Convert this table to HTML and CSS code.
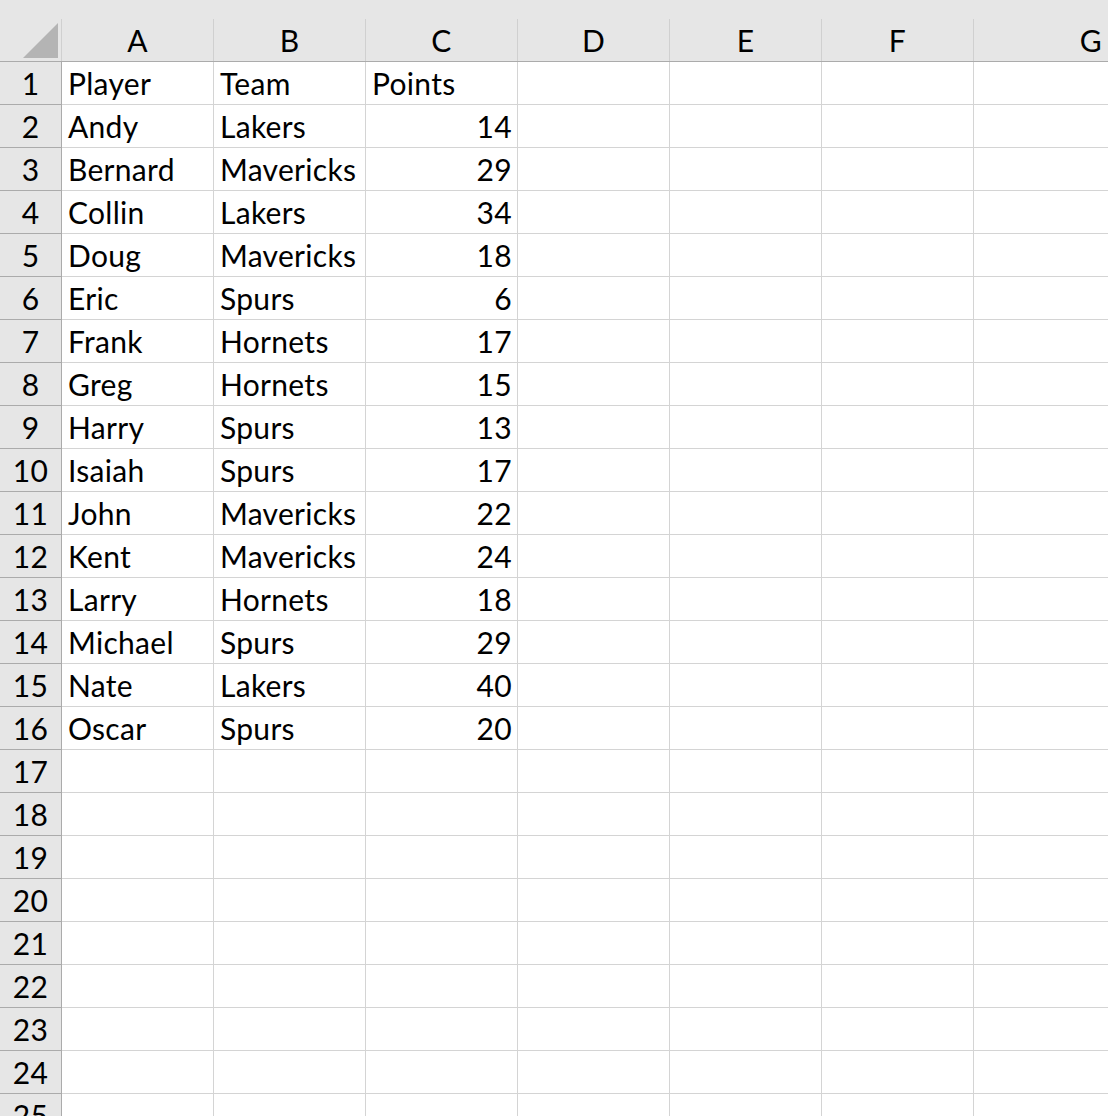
FILE: index.html
```html
<!DOCTYPE html>
<html>
<head>
<meta charset="utf-8">
<link rel="stylesheet" href="styles.css">
</head>
<body>
<div class="sheet">
  <div class="colheads">
    <div class="ch corner"><svg class="tri" width="36" height="36" viewBox="0 0 36 36"><polygon points="35,0 35,35 0,35" fill="#b4b4b4"/></svg></div>
    <div class="ch">A</div>
    <div class="ch">B</div>
    <div class="ch">C</div>
    <div class="ch">D</div>
    <div class="ch">E</div>
    <div class="ch">F</div>
    <div class="ch last">G</div>
  </div>
  <div class="grid" id="grid"></div>
</div>
<script src="app.js"></script>
</body>
</html>
```
FILE: styles.css
```css
html, body {
  margin: 0;
  padding: 0;
  background: #ffffff;
  overflow: hidden;
}
.sheet {
  width: 1108px;
  height: 1116px;
  overflow: hidden;
  font-family: Lato, "Open Sans", sans-serif;
  font-size: 30px;
  letter-spacing: 0.3px;
  color: #000;
}
.colheads {
  display: grid;
  grid-template-columns: 62px repeat(6, 152px) 134px;
  background: #e6e6e6;
  padding-top: 19px;
  border-bottom: 1px solid #ababab;
  height: 42px;
}
.ch {
  box-sizing: border-box;
  height: 42px;
  border-right: 1px solid #d0d0d0;
  text-align: center;
  line-height: 42px;
}
.ch.last {
  border-right: none;
  text-align: right;
  padding-right: 6px;
}
.corner {
  display: flex;
  justify-content: flex-start;
  align-items: flex-start;
  padding: 4px 0 0 23px;
}
.tri {
  display: block;
}
.grid {
  display: grid;
  grid-template-columns: 62px repeat(6, 152px) 134px;
  grid-auto-rows: 43px;
}
.rh {
  box-sizing: border-box;
  background: #e6e6e6;
  border-right: 1px solid #ababab;
  border-bottom: 1px solid #ababab;
  text-align: center;
  line-height: 42px;
}
.c {
  box-sizing: border-box;
  border-right: 1px solid #d4d4d4;
  border-bottom: 1px solid #d4d4d4;
  line-height: 42px;
  padding: 0 5px 0 6px;
  white-space: nowrap;
  overflow: hidden;
}
.c.num {
  text-align: right;
}
.c.last {
  border-right: none;
}
```
FILE: app.js
```js
const data = [
  ["Player","Team","Points"],
  ["Andy","Lakers",14],
  ["Bernard","Mavericks",29],
  ["Collin","Lakers",34],
  ["Doug","Mavericks",18],
  ["Eric","Spurs",6],
  ["Frank","Hornets",17],
  ["Greg","Hornets",15],
  ["Harry","Spurs",13],
  ["Isaiah","Spurs",17],
  ["John","Mavericks",22],
  ["Kent","Mavericks",24],
  ["Larry","Hornets",18],
  ["Michael","Spurs",29],
  ["Nate","Lakers",40],
  ["Oscar","Spurs",20]
];
const grid = document.getElementById("grid");
for (let r = 1; r <= 25; r++) {
  const rh = document.createElement("div");
  rh.className = "rh";
  rh.textContent = r;
  grid.appendChild(rh);
  const row = data[r - 1] || [];
  for (let c = 0; c < 7; c++) {
    const cell = document.createElement("div");
    let cls = "c";
    const v = row[c];
    if (typeof v === "number") cls += " num";
    if (c === 6) cls += " last";
    cell.className = cls;
    if (v !== undefined) cell.textContent = v;
    grid.appendChild(cell);
  }
}
```
